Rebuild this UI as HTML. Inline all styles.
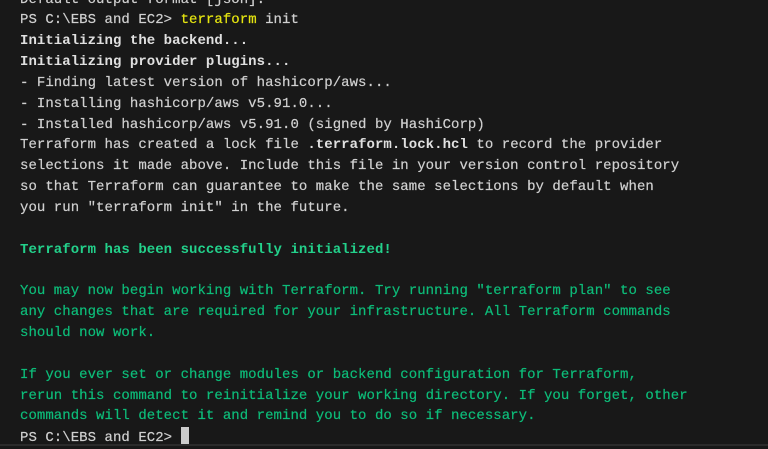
<!DOCTYPE html>
<html><head><meta charset="utf-8"><style>
html,body{margin:0;padding:0;background:#181818;width:768px;height:446px;overflow:hidden}
.t{position:absolute;left:20px;top:-10.5px;font-family:"Liberation Mono",monospace;font-size:14px;line-height:20.85px;color:#d0d0d0;white-space:pre;letter-spacing:0.05px;-webkit-text-stroke:0.2px}
.y{color:#e5e510}.b{font-weight:bold;color:#e0e0e0;-webkit-text-stroke:0}.g{color:#0dbc79}.gb{color:#23d18b;font-weight:bold;-webkit-text-stroke:0}
.cur{display:inline-block;width:8px;height:17px;background:#cccccc;vertical-align:-3px}
.bl{position:absolute;left:0;right:0;bottom:0;height:2px;background:#2b2b2b}
</style></head><body>
<div class="t">Default output format [json]:
PS C:\EBS and EC2&gt; <span class="y">terraform</span> init
<span class="b">Initializing the backend...</span>
<span class="b">Initializing provider plugins...</span>
- Finding latest version of hashicorp/aws...
- Installing hashicorp/aws v5.91.0...
- Installed hashicorp/aws v5.91.0 (signed by HashiCorp)
Terraform has created a lock file <span class="b">.terraform.lock.hcl</span> to record the provider
selections it made above. Include this file in your version control repository
so that Terraform can guarantee to make the same selections by default when
you run "terraform init" in the future.

<span class="gb">Terraform has been successfully initialized!</span>

<span class="g">You may now begin working with Terraform. Try running "terraform plan" to see
any changes that are required for your infrastructure. All Terraform commands
should now work.</span>

<span class="g">If you ever set or change modules or backend configuration for Terraform,
rerun this command to reinitialize your working directory. If you forget, other
commands will detect it and remind you to do so if necessary.</span>
PS C:\EBS and EC2&gt; <span class="cur"></span></div>
<div class="bl"></div>
</body></html>
